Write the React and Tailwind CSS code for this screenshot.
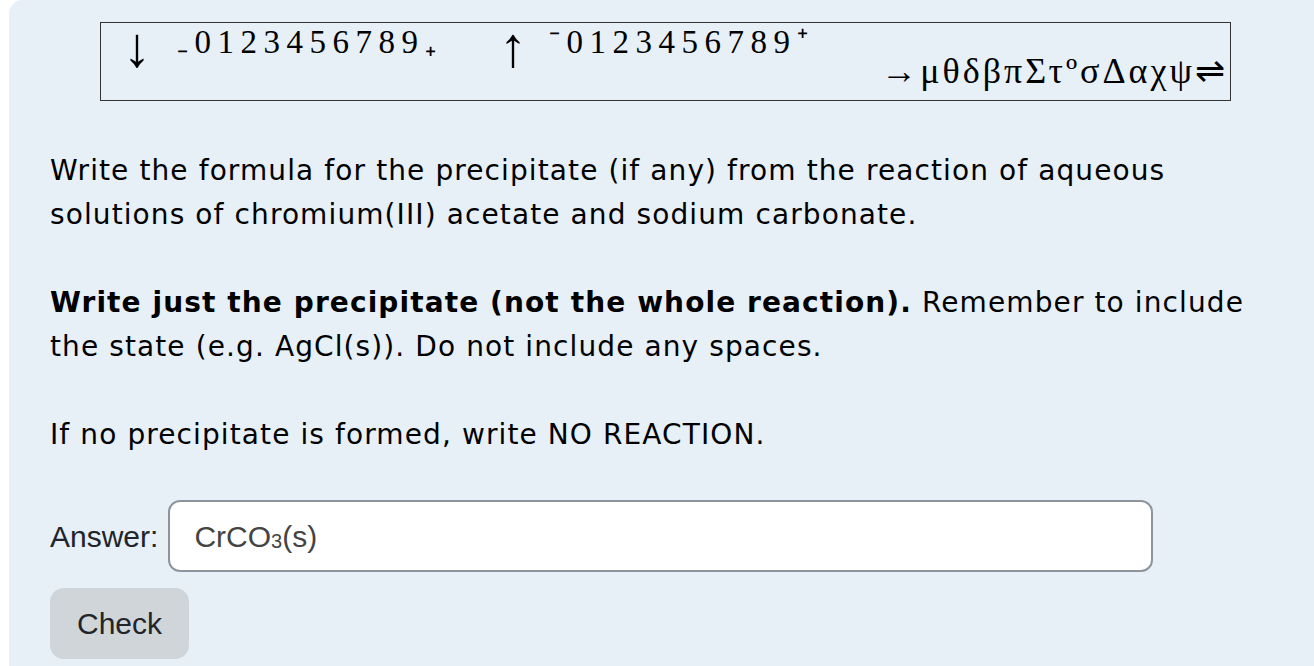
import React from 'react';

const App = () => {
  return (
    <div className="min-h-screen bg-white overflow-hidden">
      <div className="ml-[9px] min-h-[666px] rounded-tl-[14px] bg-[#e7eff7] pt-[22px] pl-[41px] text-black">
        <div className="ml-[50px] flex h-[79px] w-[1131px] border border-[#333] pl-[22px] font-['Liberation_Serif',serif] leading-none">
          <div className="flex w-[376px] items-start">
            <span className="-mt-[4px] text-[56px]">↓</span>
            <span className="ml-[26px] mt-[3px] text-[33px] tracking-[6.5px]">₋0123456789₊</span>
          </div>
          <div className="flex items-start">
            <span className="-mt-[4px] text-[56px]">↑</span>
            <span className="ml-[22px] mt-[3px] text-[33px] tracking-[6.5px]">⁻0123456789⁺</span>
          </div>
          <div className="ml-auto flex items-end pb-[11px] pr-[2px]">
            <span className="text-[36px] tracking-[3px]">→μθδβπΣτºσΔαχψ⇌</span>
          </div>
        </div>

        <div className="mt-[48px] w-[1215px] font-['DejaVu_Sans',Verdana,sans-serif] text-[28px] leading-[44px] tracking-[1.1px]">
          <p>
            Write the formula for the precipitate (if any) from the reaction of aqueous solutions of chromium(III) acetate and sodium carbonate.
          </p>
          <p className="mt-[44px]">
            <b>Write just the precipitate (not the whole reaction).</b> Remember to include the state (e.g. AgCl(s)). Do not include any spaces.
          </p>
          <p className="mt-[44px]">If no precipitate is formed, write NO REACTION.</p>
        </div>

        <div className="mt-[43px] flex items-center font-['Liberation_Sans',Arial,sans-serif] text-[30px] text-[#212529]">
          <label className="mr-[10px]">Answer:</label>
          <div className="flex h-[72px] w-[985px] items-center rounded-[12px] border-2 border-[#8f949b] bg-white pl-[24px] text-[#444]">
            CrCO<sub className="text-[20px] align-[-4px]">3</sub>(s)
          </div>
        </div>

        <button className="mt-[16px] h-[71px] w-[139px] rounded-[14px] bg-[#d0d5da] font-['Liberation_Sans',Arial,sans-serif] text-[30px] text-[#212529]">
          Check
        </button>
      </div>
    </div>
  );
};

export default App;
